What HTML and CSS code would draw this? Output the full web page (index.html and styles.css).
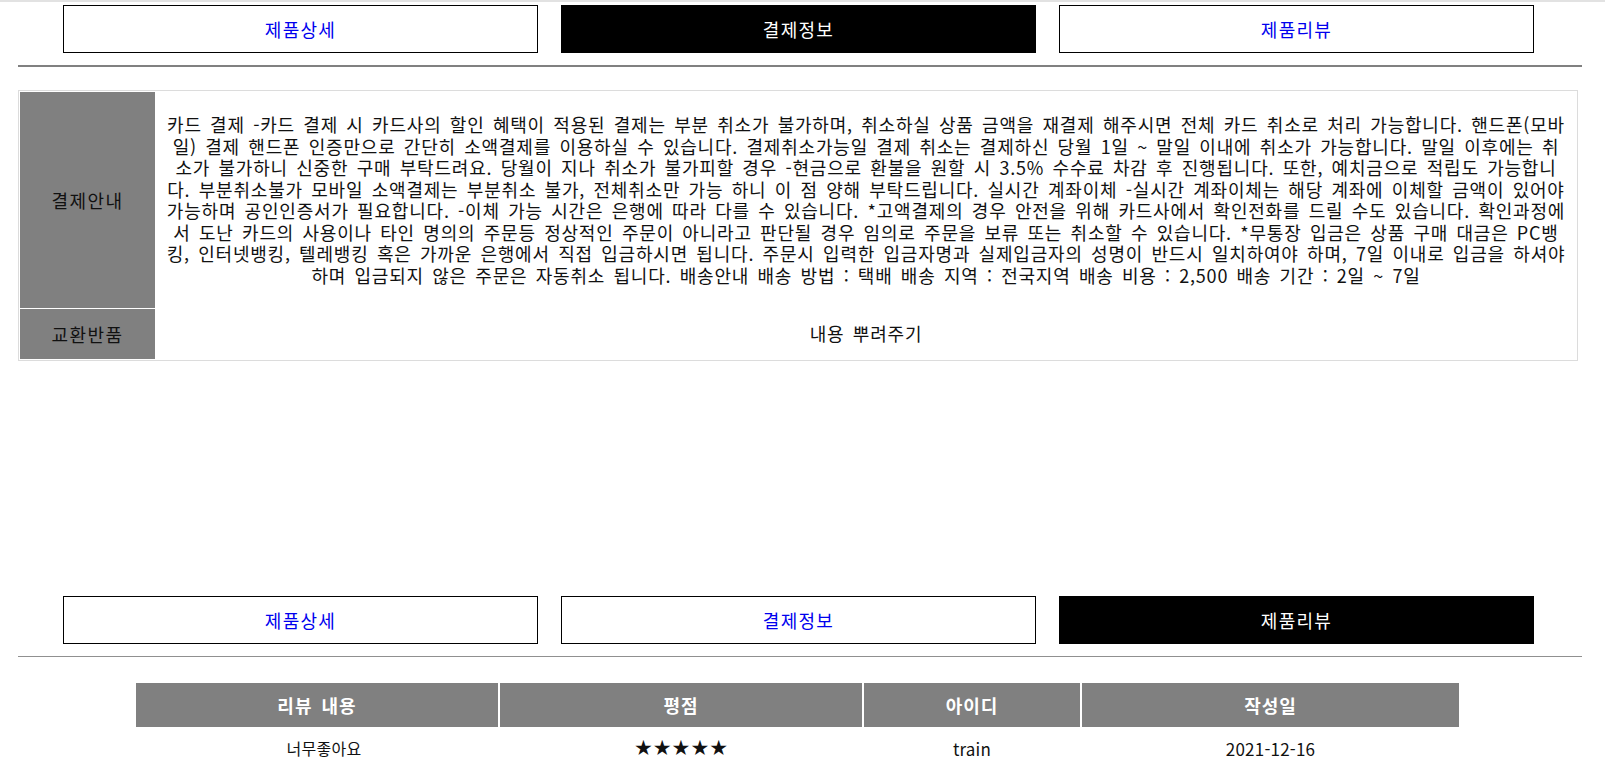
FILE: index.html
```html
<!DOCTYPE html>
<html lang="ko">
<head>
<meta charset="utf-8">
<title>결제정보</title>
<link rel="stylesheet" href="styles.css">
</head>
<body>
<div class="topline"></div>
<div class="page">
  <section class="section">
    <nav class="tabs">
      <a class="tab" href="#detail">제품상세</a>
      <a class="tab active" href="#pay">결제정보</a>
      <a class="tab" href="#review">제품리뷰</a>
    </nav>
    <hr class="rule thick">
    <table class="info">
      <tr>
        <th class="info-head">결제안내</th>
        <td class="info-body">카드 결제 -카드 결제 시 카드사의 할인 혜택이 적용된 결제는 부분 취소가 불가하며, 취소하실 상품 금액을 재결제 해주시면 전체 카드 취소로 처리 가능합니다. 핸드폰(모바일) 결제 핸드폰 인증만으로 간단히 소액결제를 이용하실 수 있습니다. 결제취소가능일 결제 취소는 결제하신 당월 1일 ~ 말일 이내에 취소가 가능합니다. 말일 이후에는 취소가 불가하니 신중한 구매 부탁드려요. 당월이 지나 취소가 불가피할 경우 -현금으로 환불을 원할 시 3.5% 수수료 차감 후 진행됩니다. 또한, 예치금으로 적립도 가능합니다. 부분취소불가 모바일 소액결제는 부분취소 불가, 전체취소만 가능 하니 이 점 양해 부탁드립니다. 실시간 계좌이체 -실시간 계좌이체는 해당 계좌에 이체할 금액이 있어야 가능하며 공인인증서가 필요합니다. -이체 가능 시간은 은행에 따라 다를 수 있습니다. *고액결제의 경우 안전을 위해 카드사에서 확인전화를 드릴 수도 있습니다. 확인과정에서 도난 카드의 사용이나 타인 명의의 주문등 정상적인 주문이 아니라고 판단될 경우 임의로 주문을 보류 또는 취소할 수 있습니다. *무통장 입금은 상품 구매 대금은 PC뱅킹, 인터넷뱅킹, 텔레뱅킹 혹은 가까운 은행에서 직접 입금하시면 됩니다. 주문시 입력한 입금자명과 실제입금자의 성명이 반드시 일치하여야 하며, 7일 이내로 입금을 하셔야 하며 입금되지 않은 주문은 자동취소 됩니다. 배송안내 배송 방법 : 택배 배송 지역 : 전국지역 배송 비용 : 2,500 배송 기간 : 2일 ~ 7일</td>
      </tr>
      <tr>
        <th class="info-head short">교환반품</th>
        <td class="info-body single">내용 뿌려주기</td>
      </tr>
    </table>
  </section>

  <section class="section reviews">
    <nav class="tabs">
      <a class="tab" href="#detail">제품상세</a>
      <a class="tab" href="#pay">결제정보</a>
      <a class="tab active" href="#review">제품리뷰</a>
    </nav>
    <hr class="rule thin">
    <table class="review">
      <thead>
        <tr>
          <th class="c1">리뷰 내용</th>
          <th class="c2">평점</th>
          <th class="c3">아이디</th>
          <th class="c4">작성일</th>
        </tr>
      </thead>
      <tbody>
        <tr>
          <td class="ko">너무좋아요</td>
          <td class="stars">★★★★★</td>
          <td class="latin">train</td>
          <td class="latin">2021-12-16</td>
        </tr>
      </tbody>
    </table>
  </section>
</div>
</body>
</html>
```

FILE: styles.css
```css
html, body {
  margin: 0;
  padding: 0;
  background: #fff;
}
body {
  font-family: "Noto Sans CJK KR", "Noto Sans", sans-serif;
  font-size: 18px;
  letter-spacing: 1px;
  color: #000;
}
.topline {
  height: 2px;
  background: #e2e2e2;
}
.page {
  width: 1564px;
  margin-left: 18px;
}
.section {
  display: flex;
  flex-direction: column;
}
.tabs {
  display: flex;
  gap: 23px;
  padding-left: 45px;
  margin-top: 3px;
}
.tab {
  box-sizing: border-box;
  width: 475px;
  height: 48px;
  border: 1px solid #000;
  display: flex;
  align-items: center;
  justify-content: center;
  color: #0000ee;
  text-decoration: none;
  letter-spacing: 1.3px;
}
.tab.active {
  background: #000;
  color: #fff;
}
.rule {
  margin: 0;
  border: 0;
  width: 100%;
}
.rule.thick {
  margin-top: 12px;
  height: 2px;
  background: #808080;
}
.rule.thin {
  margin-top: 12px;
  height: 1px;
  background: #909090;
}
.info {
  margin-top: 23px;
  width: 1560px;
  border: 1px solid #dcdcdc;
  border-spacing: 1px;
  border-collapse: separate;
}
.info-head {
  width: 135px;
  background: #808080;
  font-weight: normal;
  padding: 0;
  color: #111;
  letter-spacing: 1.5px;
}
.info-head.short {
  height: 50px;
}
.info-body {
  text-align: center;
  padding: 22px 8px;
  line-height: 21.5px;
  letter-spacing: 0.8px;
  word-spacing: 2.5px;
  color: #111;
}
.info-body.single {
  padding: 0 8px;
  height: 50px;
}
.reviews {
  margin-top: 232px;
}
.review {
  margin-top: 26px;
  margin-left: 116px;
  width: 1327px;
  border-collapse: separate;
  border-spacing: 2px 0;
}
.review th {
  background: #808080;
  color: #fff;
  font-weight: bold;
  height: 44px;
  padding: 0;
  letter-spacing: 1px;
  word-spacing: 3px;
}
.review td {
  text-align: center;
  height: 42px;
  padding: 0;
  color: #111;
}
.review td.ko {
  font-size: 16px;
  letter-spacing: 0.3px;
  padding-left: 14px;
}
.review td.latin {
  font-size: 17px;
  letter-spacing: 0.2px;
}
.c1 { width: 362px; }
.c2 { width: 362px; }
.c3 { width: 216px; }
.c4 { width: 377px; }
.stars {
  font-family: "DejaVu Sans", sans-serif;
  font-size: 21px;
  letter-spacing: 0;
  padding-top: 2px;
}
```
